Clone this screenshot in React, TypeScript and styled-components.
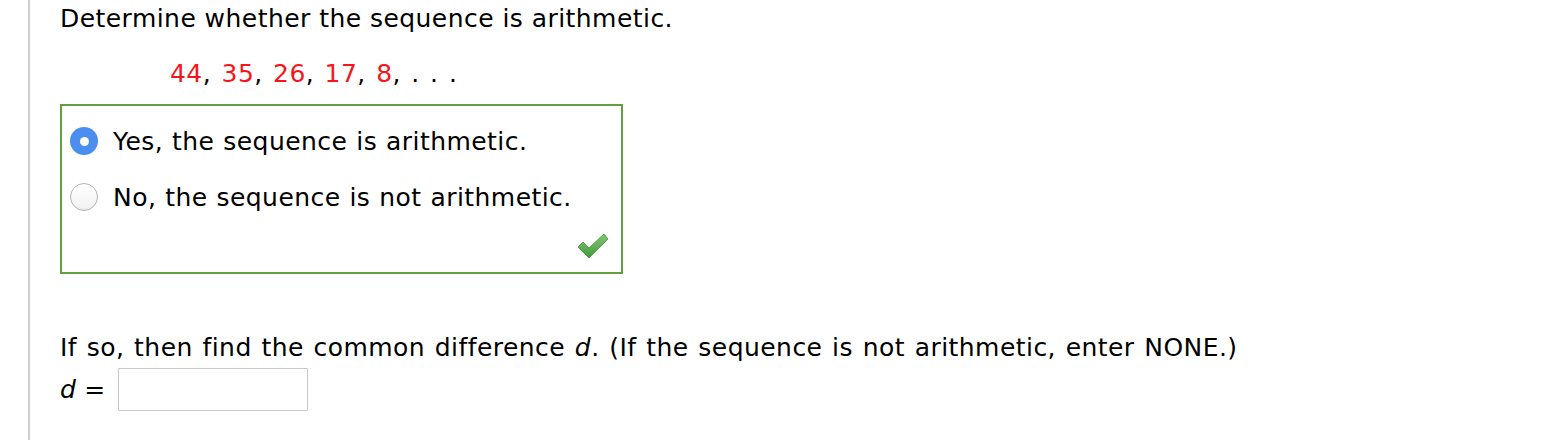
import React from 'react';
import styled, { createGlobalStyle } from 'styled-components';

const GlobalStyle = createGlobalStyle`
  html, body {
    margin: 0;
    padding: 0;
    background: #fff;
  }
  body {
    font-family: 'DejaVu Sans', Verdana, sans-serif;
    color: #000;
  }
`;

const Page = styled.div`
  height: 440px;
  padding-left: 28px;
`;

const Question = styled.div`
  border-left: 2px solid #cfcfcf;
  height: 440px;
  padding: 4px 0 0 30px;
  box-sizing: border-box;
  font-size: 25px;
  letter-spacing: 0.45px;
`;

const Prompt = styled.p`
  margin: 0;
  line-height: 30px;
  height: 30px;
`;

const Sequence = styled.div`
  margin: 25px 0 0 110px;
  line-height: 30px;
  height: 30px;
  word-spacing: 2px;
`;

const Num = styled.span`
  color: #f5151d;
`;

const ChoiceBox = styled.div`
  margin-top: 15px;
  width: 563px;
  height: 170px;
  border: 2px solid #62a03d;
  position: relative;
  padding-top: 21px;
  box-sizing: border-box;
`;

const Choice = styled.label`
  display: flex;
  align-items: center;
  height: 28px;
  margin-bottom: 28px;
  padding-left: 8px;
  word-spacing: 0.5px;
`;

const Radio = styled.span<{ $checked?: boolean }>`
  width: 28px;
  height: 28px;
  border-radius: 50%;
  box-sizing: border-box;
  margin-right: 15px;
  flex: none;
  position: relative;
  background: ${(p) => (p.$checked ? '#4a8ef0' : 'linear-gradient(#fff, #f2f2f2)')};
  border: ${(p) => (p.$checked ? 'none' : '1px solid #b5b5b5')};
  box-shadow: ${(p) => (p.$checked ? 'none' : 'inset 0 -1px 1px rgba(0,0,0,0.06)')};

  &::after {
    content: '';
    display: ${(p) => (p.$checked ? 'block' : 'none')};
    position: absolute;
    left: 50%;
    top: 50%;
    width: 9px;
    height: 9px;
    margin: -4.5px 0 0 -4.5px;
    border-radius: 50%;
    background: #fff;
  }
`;

const Check = styled.svg`
  position: absolute;
  right: 11px;
  bottom: 12px;
`;

const FollowUp = styled.p`
  margin: 59px 0 0;
  line-height: 30px;
  height: 30px;
  word-spacing: 1.3px;
`;

const AnswerRow = styled.div`
  display: flex;
  align-items: center;
  margin-top: 5px;
`;

const Var = styled.i`
  font-style: italic;
`;

const Eq = styled.span`
  margin: 0 12px 0 8px;
`;

const AnswerInput = styled.input`
  width: 190px;
  height: 43px;
  box-sizing: border-box;
  border: 1px solid #c8c8c8;
  border-radius: 1px;
  font: inherit;
  padding: 0 6px;
  outline: none;
`;

const CheckMark = () => (
  <Check width="34" height="28" viewBox="0 0 34 28">
    <defs>
      <linearGradient id="chk" x1="0" y1="0" x2="0" y2="1">
        <stop offset="0" stopColor="#82c874" />
        <stop offset="1" stopColor="#3f9b3b" />
      </linearGradient>
    </defs>
    <path
      d="M2 15 L7 10 L13 16 L28 2 L32 7 L13 26 Z"
      fill="url(#chk)"
      stroke="#55a24a"
      strokeWidth="1"
      strokeLinejoin="round"
    />
  </Check>
);

export default function App() {
  const terms = [44, 35, 26, 17, 8];
  return (
    <>
      <GlobalStyle />
      <Page>
        <Question>
          <Prompt>Determine whether the sequence is arithmetic.</Prompt>
          <Sequence>
            {terms.map((t) => (
              <React.Fragment key={t}>
                <Num>{t}</Num>,{' '}
              </React.Fragment>
            ))}
            . . .
          </Sequence>
          <ChoiceBox>
            <Choice>
              <Radio $checked />
              Yes, the sequence is arithmetic.
            </Choice>
            <Choice>
              <Radio />
              No, the sequence is not arithmetic.
            </Choice>
            <CheckMark />
          </ChoiceBox>
          <FollowUp>
            If so, then find the common difference <Var>d</Var>. (If the sequence is not
            arithmetic, enter NONE.)
          </FollowUp>
          <AnswerRow>
            <Var>d</Var>
            <Eq>=</Eq>
            <AnswerInput type="text" />
          </AnswerRow>
        </Question>
      </Page>
    </>
  );
}
